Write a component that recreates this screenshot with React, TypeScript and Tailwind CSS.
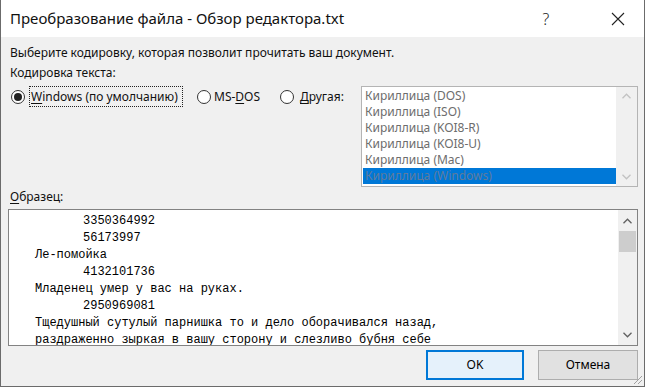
import React from 'react';

const ui = "font-['Segoe_UI','Noto_Sans','Liberation_Sans',sans-serif]";
const mono = "font-['Liberation_Mono','Courier_New',monospace]";

const encodings = [
  'Кириллица (DOS)',
  'Кириллица (ISO)',
  'Кириллица (KOI8-R)',
  'Кириллица (KOI8-U)',
  'Кириллица (Mac)',
  'Кириллица (Windows)',
];

// indent: true = число с отступом
const sample = [
  { text: '3350364992', indent: true },
  { text: '56173997', indent: true },
  { text: 'Ле-помойка', indent: false },
  { text: '4132101736', indent: true },
  { text: 'Младенец умер у вас на руках.', indent: false },
  { text: '2950969081', indent: true },
  { text: 'Тщедушный сутулый парнишка то и дело оборачивался назад,', indent: false },
  { text: 'раздраженно зыркая в вашу сторону и слезливо бубня себе', indent: false },
];

const Chevron = ({ up, color }: { up?: boolean; color: string }) => (
  <svg width="9" height="6" viewBox="0 0 9 6">
    <path d={up ? 'M0.5 5.2 L4.5 1.2 L8.5 5.2' : 'M0.5 0.8 L4.5 4.8 L8.5 0.8'} fill="none" stroke={color} strokeWidth="1.3" />
  </svg>
);

const Radio = ({ checked }: { checked?: boolean }) => (
  <span className="w-[14px] h-[14px] rounded-full border border-[#333] bg-white flex items-center justify-center shrink-0">
    {checked && <span className="w-[8px] h-[8px] rounded-full bg-[#222]" />}
  </span>
);

export default function App() {
  return (
    <div className={`w-[648px] h-[388px] bg-white overflow-hidden ${ui}`}>
      <div className="w-[645px] h-[387px] border border-[#6b6b6b] border-t-0 flex flex-col relative">
        {/* title bar */}
        <div className="h-[37px] bg-white flex items-center shrink-0">
          <span className="pl-[9px] text-[15px] text-[#111] leading-none">Преобразование файла - Обзор редактора.txt</span>
          <span className="ml-auto w-[46px] text-center text-[16px] font-light text-[#222] mr-[26px]">?</span>
          <span className="w-[46px] flex justify-center mr-[3px]">
            <svg width="14" height="14" viewBox="0 0 14 14">
              <path d="M1 1 L13 13 M13 1 L1 13" stroke="#222" strokeWidth="1.1" />
            </svg>
          </span>
        </div>

        <div className="flex-1 bg-[#f0f0f0] pl-[7px] pr-[6px] pt-[6px] text-[12px] text-[#111] flex flex-col">
          <div className="leading-[20px] pl-[2px]">Выберите кодировку, которая позволит прочитать ваш документ.</div>
          <div className="leading-[20px] pl-[2px]">Кодировка текста:</div>

          <div className="flex mt-[3px]">
            <div className="flex items-center h-[21px]">
              <span className="ml-[3px]"><Radio checked /></span>
              <span className="ml-[4px] w-[154px] h-[21px] border border-dotted border-[#222] flex items-center pl-[1px]">
                <span><span className="underline underline-offset-2">W</span>indows (по умолчанию)</span>
              </span>
              <span className="ml-[14px]"><Radio /></span>
              <span className="ml-[3px] w-[66px]">MS-<span className="underline underline-offset-2">D</span>OS</span>
              <Radio />
              <span className="ml-[6px]"><span className="underline underline-offset-2">Д</span>ругая:</span>
            </div>

            <div className="ml-auto w-[277px] h-[101px] border border-[#b4b4b4] bg-white flex">
              <div className="flex-1 pl-[1px] pt-[1px] text-[#6d6d6d]">
                {encodings.map((e, i) => (
                  <div
                    key={e}
                    className={`h-[16px] leading-[16px] pl-[2px] ${i === encodings.length - 1 ? 'bg-[#0078d7] text-[#5f7b9c]' : ''}`}
                  >
                    {e}
                  </div>
                ))}
              </div>
              <div className="w-[21px] bg-[#f0f0f0] flex flex-col items-center justify-between py-[6px]">
                <Chevron up color="#c2c2c2" />
                <Chevron color="#c2c2c2" />
              </div>
            </div>
          </div>

          <div className="leading-[20px] pl-[2px]">
            <span className="underline underline-offset-2">О</span>бразец:
          </div>

          <div className="mt-[2px] h-[137px] border border-[#828282] bg-white flex overflow-hidden">
            <div className={`flex-1 pl-[26px] pt-[3px] text-[12px] leading-[17px] text-black whitespace-pre ${mono}`}>
              {sample.map((l, i) => (
                <div key={i} className={l.indent ? 'pl-[48px]' : ''}>{l.text}</div>
              ))}
            </div>
            <div className="w-[19px] bg-[#f0f0f0] flex flex-col">
              <div className="h-[21px] flex items-center justify-center"><Chevron up color="#606060" /></div>
              <div className="h-[21px] mx-[1px] bg-[#cdcdcd]" />
              <div className="flex-1" />
              <div className="h-[21px] flex items-center justify-center"><Chevron color="#606060" /></div>
            </div>
          </div>

          <div className="flex justify-end gap-[14px] mt-[4px]">
            <button className="w-[98px] h-[30px] border-2 border-[#0078d7] bg-[#e5f1fb] text-[12px] text-black">OK</button>
            <button className="w-[100px] h-[30px] border border-[#adadad] bg-[#e1e1e1] text-[12px] text-black">Отмена</button>
          </div>
        </div>

        {/* size grip */}
        <svg className="absolute right-[1px] bottom-[1px]" width="12" height="12" viewBox="0 0 12 12">
          <path d="M11 3 L3 11 M11 7 L7 11" stroke="#a0a0a0" strokeWidth="1" />
        </svg>
      </div>
    </div>
  );
}
